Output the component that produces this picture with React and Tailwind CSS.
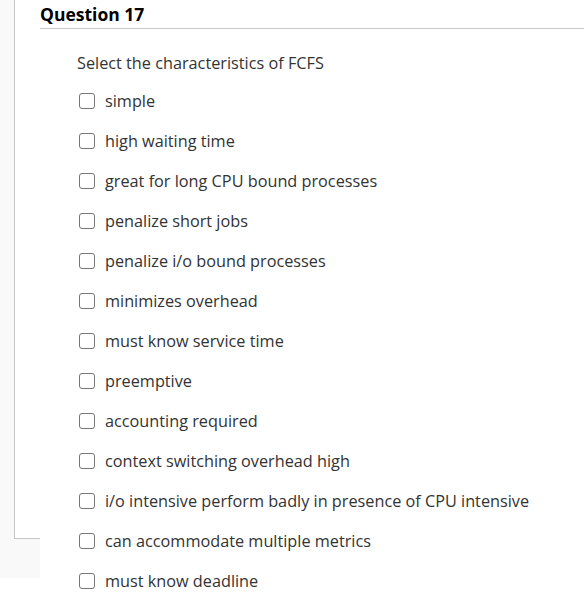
import React from 'react'

const options = [
    'simple',
    'high waiting time',
    'great for long CPU bound processes',
    'penalize short jobs',
    'penalize i/o bound processes',
    'minimizes overhead',
    'must know service time',
    'preemptive',
    'accounting required',
    'context switching overhead high',
    'i/o intensive perform badly in presence of CPU intensive',
    'can accommodate multiple metrics',
    'must know deadline',
]

function Option({ label }) {
    return (
        <label className="flex items-center h-[40px] text-[16.25px] text-[#333]">
            <span className="w-[16px] h-[16px] rounded-[3px] border border-[#777] bg-white ml-[2px] mr-[10px]"></span>
            {label}
        </label>
    )
}

export default function App() {
    return (
        <div className="flex w-[584px] h-[599px] bg-white overflow-hidden" style={{ fontFamily: '"Open Sans", sans-serif' }}>
            {/* left gutter */}
            <div className="w-[40px] shrink-0 flex flex-col">
                <div className="flex h-[539px]">
                    <div className="w-[14px] bg-[#f9f9f9]"></div>
                    <div className="flex-1 bg-white border-l border-b border-[#c7c7c7]"></div>
                </div>
                <div className="h-[39px] bg-[#f9f9f9]"></div>
            </div>

            <div className="flex-1">
                <div className="h-[29px] border-b border-[#c7c7c7] flex items-end">
                    <h2 className="text-[17.5px] font-bold text-black leading-[24px] pb-[2px]">Question 17</h2>
                </div>
                <div className="pl-[37px] pt-[22px]">
                    <p className="text-[16.25px] text-[#333] leading-[24px] mb-[6px]">Select the characteristics of FCFS</p>
                    <div className="flex flex-col">
                        {options.map(o => <Option key={o} label={o} />)}
                    </div>
                </div>
            </div>
        </div>
    )
}
